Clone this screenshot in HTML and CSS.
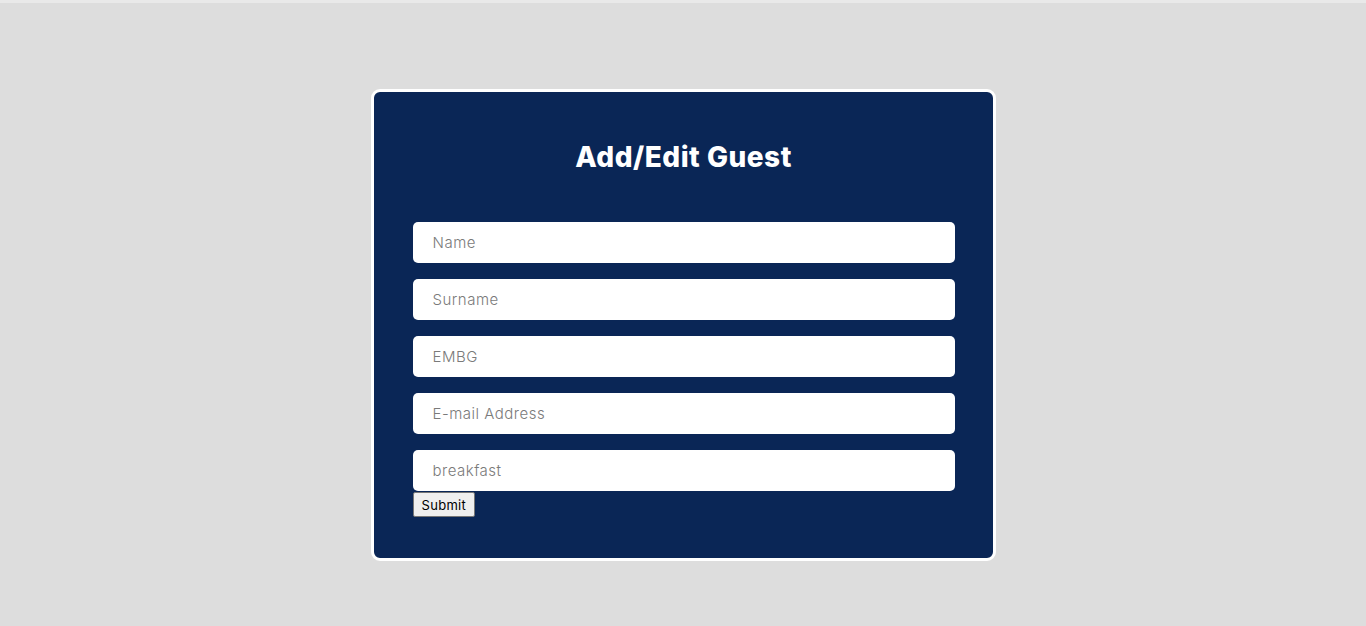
FILE: index.html
```html
<!DOCTYPE html>
<html lang="en">
<head>
    <meta charset="UTF-8">
    <meta name="viewport" content="width=device-width, initial-scale=1.0">
    <title>Add/Edit Guest</title>
    <link rel="stylesheet" href="styles.css">
</head>
<body>
    <div class="topbar"></div>
    <main>
        <div class="card">
            <h2>Add/Edit Guest</h2>
            <form>
                <input type="text" placeholder="Name">
                <input type="text" placeholder="Surname">
                <input type="text" placeholder="EMBG">
                <input type="email" placeholder="E-mail Address">
                <input type="text" class="last" placeholder="breakfast">
                <button type="submit">Submit</button>
            </form>
        </div>
    </main>
</body>
</html>
```

FILE: styles.css
```css
/* Page */
body {
    margin: 0;
    background-color: #dddddd;
    font-family: Inter, "Open Sans", sans-serif;
}

.topbar {
    height: 3px;
    background-color: #e9e9e9;
}

main {
    display: flex;
    justify-content: center;
    padding-top: 86px;
}

/* Card */
.card {
    box-sizing: border-box;
    width: 625px;
    height: 472px;
    background-color: #0a2656;
    border: 3px solid #ffffff;
    border-radius: 9px;
    padding: 48px 38px 0 39px;
}

.card h2 {
    margin: 0 0 48px 0;
    color: #ffffff;
    text-align: center;
    font-size: 28px;
    line-height: 34px;
    font-weight: 800;
    letter-spacing: 0.5px;
}

/* Form */
form input {
    display: block;
    box-sizing: border-box;
    width: 542px;
    height: 41px;
    margin: 0 0 16px 0;
    padding: 0 20px;
    border: none;
    border-radius: 5px;
    background-color: #ffffff;
    font-family: Inter, "Open Sans", sans-serif;
    font-size: 15px;
    font-weight: 300;
    letter-spacing: 0.5px;
    outline: none;
}

form input::placeholder {
    color: #7a7a7a;
}

form input.last {
    margin-bottom: 1px;
}

form button {
    font-family: Inter, "Open Sans", sans-serif;
    font-size: 13px;
    letter-spacing: 0.3px;
    height: 25px;
    padding: 0 8px;
    background-color: #efefef;
    border: 1px solid #767676;
    border-radius: 2px;
    color: #000000;
}
```
